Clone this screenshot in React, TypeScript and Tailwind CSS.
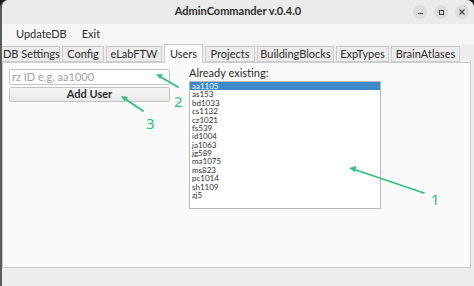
import React from "react";

const tabs: [string, number][] = [
  ["DB Settings", 58],
  ["Config", 42],
  ["eLabFTW", 56],
  ["Users", 39],
  ["Projects", 50],
  ["BuildingBlocks", 77],
  ["ExpTypes", 53],
  ["BrainAtlases", 69],
];
const users = ["aa1105", "as153", "bd1033", "cs1132", "cz1021", "fs539", "id1004", "ja1063", "jg589", "ma1075", "ms823", "pc1014", "sh1109", "zj5"];

export default function App() {
  return (
    <div className="relative w-[474px] h-[286px] overflow-hidden bg-[#1a1a1a] font-['Lato',sans-serif] text-[#2e2e2e]">
      <div className="flex h-full flex-col rounded-tl-[8px] rounded-tr-[8px] border-l-2 border-[#5b5b5b] bg-[#ededed]">
        {/* Title bar */}
        <div className="relative flex h-[24px] shrink-0 items-center justify-center rounded-tl-[8px] rounded-tr-[8px] bg-[#ebebeb]">
          <span className="-mt-[1px] text-[11px] font-bold text-[#2e2e2e]">AdminCommander v.0.4.0</span>
          <div className="absolute right-[5px] top-[5px] flex gap-[7px]">
            <div className="flex h-[14px] w-[14px] items-center justify-center rounded-full bg-[#dcdcdc]">
              <div className="mt-[3px] h-[1px] w-[5px] bg-[#444]" />
            </div>
            <div className="flex h-[14px] w-[14px] items-center justify-center rounded-full bg-[#dcdcdc]">
              <div className="h-[5px] w-[5px] border border-[#444]" />
            </div>
            <div className="flex h-[14px] w-[14px] items-center justify-center rounded-full bg-[#dcdcdc]">
              <svg width="6" height="6" viewBox="0 0 6 6"><path d="M0.5 0.5L5.5 5.5M5.5 0.5L0.5 5.5" stroke="#444" strokeWidth="1.1" /></svg>
            </div>
          </div>
        </div>
        {/* Menu bar */}
        <div className="flex h-[21px] shrink-0 items-center gap-[15px] bg-[#f6f6f6] pl-[14px] text-[11px]">
          <span>UpdateDB</span>
          <span>Exit</span>
        </div>
        {/* Tabs */}
        <div className="flex h-[17px] shrink-0 items-end gap-[2px] whitespace-nowrap bg-[#ededed] text-[11px]">
          {tabs.map(([t, w], i) => (
            <div
              key={t}
              style={{ width: w }}
              className={
                t === "Users"
                  ? "relative z-10 -mb-[1px] flex h-[19px] items-center justify-center border border-b-0 border-[#cdcdcd] bg-[#fafafa]"
                  : i === 0
                  ? "flex h-[16px] items-center border border-l-0 border-[#cdcdcd] bg-[#ebebeb] pl-[1px]"
                  : "flex h-[16px] items-center justify-center border border-[#cdcdcd] bg-[#ebebeb]"
              }
            >
              {t}
            </div>
          ))}
        </div>
        {/* Panel */}
        <div className="mr-[3px] flex h-[206px] shrink-0 gap-[19px] border border-[#cdcdcd] bg-[#fafafa] pl-[6px] pt-[6px]">
          <div className="flex w-[161px] flex-col gap-[2px]">
            <div className="flex h-[16px] items-center rounded-[2px] border border-[#c4c4c4] bg-white pl-[2px] text-[11px] text-[#a0a0a0]">
              rz ID e.g. aa1000
            </div>
            <div className="flex h-[15px] items-center justify-center rounded-[2px] border border-[#c2c2c2] bg-gradient-to-b from-[#f6f6f6] to-[#e8e8e8] text-[11px] font-bold">
              Add User
            </div>
          </div>
          <div className="-mt-[1px] flex flex-col">
            <div className="h-[13px] text-[11px] leading-[9px]">Already existing:</div>
            <div className="h-[128px] w-[192px] border border-[#b8b8b8] bg-white text-[8px] leading-[8.38px]">
              {users.map((u, i) => (
                <div key={u} className={i === 0 ? "bg-[#3d8acb] pl-[2px] text-white" : "pl-[2px]"}>
                  {u}
                </div>
              ))}
            </div>
          </div>
        </div>
      </div>
      {/* Annotations */}
      <svg className="pointer-events-none absolute left-0 top-0" width="474" height="286">
        <g stroke="#2dc27a" strokeWidth="1.8" fill="#2dc27a" strokeLinecap="round">
          <line x1="178" y1="87" x2="159" y2="76" />
          <path d="M156 74 L163 74.5 L160 79 Z" stroke="none" />
          <line x1="143" y1="111" x2="124" y2="98" />
          <path d="M121 96 L128 97 L124.5 101.5 Z" stroke="none" />
          <line x1="424" y1="193" x2="353" y2="169" />
          <path d="M349 168 L356 166 L355 172 Z" stroke="none" />
        </g>
        <g fill="#2dc27a" fontFamily="Noto Sans, sans-serif" fontSize="15">
          <text x="174" y="107">2</text>
          <text x="146" y="129">3</text>
          <text x="431" y="205">1</text>
        </g>
      </svg>
    </div>
  );
}
